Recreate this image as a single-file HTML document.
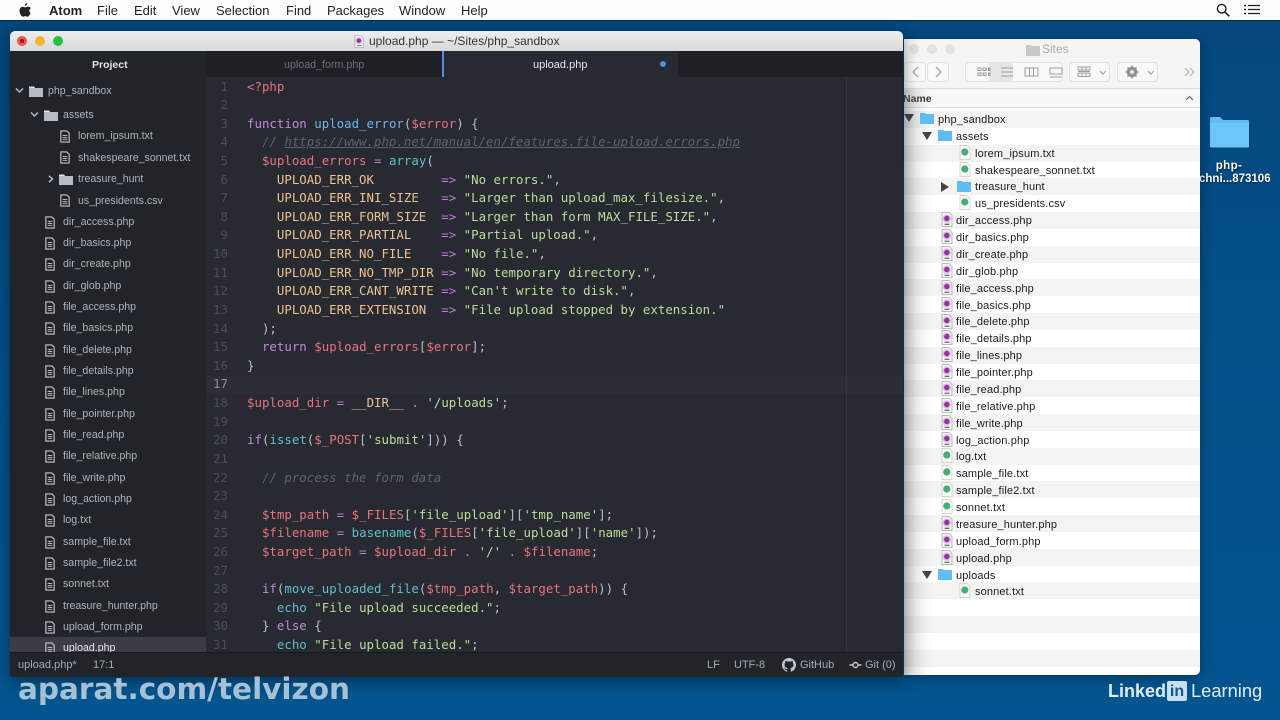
<!DOCTYPE html>
<html><head><meta charset="utf-8"><title>Atom</title>
<style>
*{box-sizing:border-box}
html,body{margin:0;padding:0;width:1280px;height:720px;overflow:hidden;background:#04528c;font-family:"Liberation Sans",sans-serif}
body{filter:blur(.3px)}
.a{position:absolute}
#bg{left:0;top:0;width:1280px;height:720px;background:linear-gradient(180deg,#04477c 0%,#044f88 40%,#03558f 100%)}
#menu{left:0;top:0;width:1280px;background:#fdfdfd;border-bottom:1px solid #0a2a4a;height:21px;font-size:13px;color:#222}
#menu span{position:absolute;top:2px;line-height:17px}
#atom{left:10px;top:31px;width:893px;height:646px;background:#212429;border-radius:5px 5px 4px 4px;overflow:hidden;box-shadow:0 4px 16px rgba(0,0,0,.45)}
#tb{left:0;top:0;width:893px;height:20px;background:linear-gradient(#eee,#d8d8d8);font-size:12px;color:#333;line-height:21px}
.dot{position:absolute;width:10px;height:10px;border-radius:50%;top:5px}
#tree .r,#fin .r{position:absolute;height:20px;line-height:20px;white-space:nowrap}
#tree .r{font-size:10.6px;color:#adb3be;transform:translateY(1px)}
#tree svg{margin-top:1px}
#editor{left:206px;top:77px;width:697px;height:575px;background:#272a30;overflow:hidden}
#code{position:absolute;left:0;top:0;width:697px;font:12.41px/18.62px "DejaVu Sans Mono","Liberation Mono",monospace;color:#b9bec8}
#code div{position:absolute;left:31px;height:18.62px;white-space:pre}
.ln{position:absolute;left:0;width:22px;text-align:right;color:#4a4e58;white-space:pre}
.k{color:#c586dd}.f{color:#6cb6f2}.v{color:#e8737e}.s{color:#bcdc9c}.c{color:#5c6370;font-style:italic}.u{text-decoration:underline}.o{color:#c678dd}.n{color:#ecc293}.m{color:#c678dd}.t{color:#5cc0cc}
#fin{left:904px;top:39px;width:296px;height:636px;background:#fff;border-radius:0 5px 5px 0;overflow:hidden;box-shadow:0 3px 12px rgba(0,0,0,.35)}
#fin .r{font-size:11px;color:#1c1c1c;letter-spacing:.14px;transform:translateY(1px)}
.st{position:absolute;left:0;width:296px;height:17px;background:#f3f3f1}
.btn{position:absolute;top:23px;height:20px;background:#f9f9f9;border:1px solid #e2e2e2;border-radius:4px}
.tri{position:absolute;width:0;height:0}
</style></head><body>
<svg width="0" height="0" style="position:absolute"><defs>
<symbol id="fi" viewBox="0 0 12 14"><path d="M1.500 1h6.500l2.500 2.500V13h-9z" fill="none" stroke="#c3c7cf" stroke-width="1.200"/><path d="M3.500 6h5M3.500 8h5M3.500 10h5" stroke="#c3c7cf" stroke-width="1"/></symbol>
<symbol id="fo" viewBox="0 0 14 12"><path d="M0 1.500h5l1 1.500h8v9H0z" fill="#b5bac4"/><path d="M0 1.500h5l1 1.500H0z" fill="#dde0e5"/></symbol>
<symbol id="bf" viewBox="0 0 14 12"><path d="M0 1h5l1 1h8v10H0z" fill="#5fbdf2"/></symbol>
<symbol id="gf" viewBox="0 0 12 15"><path d="M1 .5h7l3 3v11H1z" fill="#fbfbfb" stroke="#c9c9c9" stroke-width=".7"/><circle cx="5.800" cy="7" r="3.600" fill="#45ad76"/></symbol>
<symbol id="pf" viewBox="0 0 12 15"><path d="M1 .5h7l3 3v11H1z" fill="#f6f6f6" stroke="#a8a8a8" stroke-width=".8"/><circle cx="5.800" cy="6.500" r="4.300" fill="#d9c3e2"/><circle cx="5.800" cy="6.500" r="2.700" fill="#98309f"/><path d="M3.500 12.300h5" stroke="#777" stroke-width="1.300"/></symbol>
</defs></svg>
<div id="bg" class="a"></div>

<div id="menu" class="a">
<svg class="a" style="left:19px;top:3px" width="12" height="14" viewBox="0 0 12 14"><path d="M8.200 0c.1 1.300-1 2.700-2.500 2.800C5.500 1.500 6.800.2 8.200 0zM11.600 10c-.6 1.500-1.800 3.700-3.200 3.700-.9 0-1.300-.6-2.300-.6s-1.500.6-2.300.6C2.300 13.700.5 10.500.5 7.800c0-2.700 1.800-4.100 3.400-4.100 1 0 1.700.7 2.300.7s1.500-.8 2.700-.8c.6 0 2.100.2 3 1.600-2.300 1.400-1.900 4 -.3 4.800z" fill="#222"/></svg>
<span style="left:49px;font-weight:bold">Atom</span><span style="left:97px">File</span><span style="left:134px">Edit</span><span style="left:172px">View</span><span style="left:216px">Selection</span><span style="left:286px">Find</span><span style="left:327px">Packages</span><span style="left:399px">Window</span><span style="left:461px">Help</span>
<svg class="a" style="left:1216px;top:3px" width="14" height="14" viewBox="0 0 14 14"><circle cx="5.700" cy="5.700" r="4.300" fill="none" stroke="#222" stroke-width="1.400"/><path d="M9 9l4.300 4.300" stroke="#222" stroke-width="1.600"/></svg>
<svg class="a" style="left:1244px;top:4px" width="16" height="12" viewBox="0 0 16 12"><path d="M4 1.500h12M4 5.500h12M4 9.500h12" stroke="#222" stroke-width="1.300"/><path d="M0 1.500h2M0 5.500h2M0 9.500h2" stroke="#222" stroke-width="1.500"/></svg>
</div>

<!-- Desktop folder -->
<svg class="a" style="left:1209px;top:116px" width="41" height="32" viewBox="0 0 41 32"><path d="M1 2.500a1.500 1.500 0 011.500-1.500H11l3 3h24.500A1.500 1.500 0 0140 5.500V30a1.500 1.500 0 01-1.500 1.500h-36A1.500 1.500 0 011 30z" fill="#62bdf0"/><path d="M1 7h39v24H1z" fill="#6cc6f7"/></svg>
<div class="a" style="left:1170px;top:160px;width:118px;text-align:center;font-size:11.500px;letter-spacing:.4px;font-weight:bold;color:#fff;line-height:13.500px;text-shadow:0 1px 2px rgba(0,0,0,.6)">php-</div>
<div class="a" style="left:1199px;top:173px;white-space:nowrap;font-size:11.500px;font-weight:bold;color:#fff;line-height:13.500px;text-shadow:0 1px 2px rgba(0,0,0,.6)">chni...873106</div>

<!-- Finder -->
<div id="fin" class="a">
<div class="a" style="left:0;top:0;width:296px;height:51px;background:#f5f5f5"></div>
<div class="dot" style="left:5px;top:5px;background:#e2e2e2;width:10px;height:10px"></div>
<div class="dot" style="left:23px;top:5px;background:#e2e2e2"></div>
<div class="dot" style="left:41px;top:5px;background:#e2e2e2"></div>
<svg class="a" style="left:122px;top:5px" width="14" height="12" viewBox="0 0 14 12"><path d="M0 1h5l1 1h8v10H0z" fill="#c8c8c8"/></svg>
<div class="a" style="left:138px;top:3px;font-size:12px;line-height:15px;color:#a9a9a9">Sites</div>
<div class="btn" style="left:0;width:22px"></div><div class="btn" style="left:23px;width:22px"></div>
<svg class="a" style="left:0;top:23px" width="48" height="20" viewBox="0 0 48 20"><path d="M14 5l-5 5 5 5" fill="none" stroke="#a5a5a5" stroke-width="1.300"/><path d="M32 5l5 5-5 5" fill="none" stroke="#a5a5a5" stroke-width="1.300"/></svg>
<div class="btn" style="left:61px;width:98px"></div>
<div class="a" style="left:85px;top:23px;width:24px;height:20px;background:#e6e6e6"></div>
<svg class="a" style="left:61px;top:23px" width="98" height="20" viewBox="0 0 98 20" fill="none" stroke="#9a9a9a"><path d="M13 6h3v2.500h-3zM18 6h3v2.500h-3zM13 11h3v2.500h-3zM18 11h3v2.500h-3z"/><path d="M24 6h1.500v2.500H24zM24 11h1.500v2.500H24z" transform="translate(-.5 0)"/><path d="M36 6h12M36 10h12M36 14h12"/><path d="M60 6h13v8H60zM64.500 6v8M68.500 6v8"/><path d="M85 6h12v6H85zM85 15h12"/></svg>
<div class="btn" style="left:165px;width:41px"></div>
<svg class="a" style="left:165px;top:23px" width="41" height="20" viewBox="0 0 41 20" fill="none" stroke="#a0a0a0"><path d="M9 5h12v3H9zM9 9.500h12M9 11h12v3.500H9zM13 5v3M17 5v3M13 11v3.500M17 11v3.500"/><path d="M31 9l3 3 3-3" stroke-width="1.100"/></svg>
<div class="btn" style="left:213px;width:41px"></div>
<svg class="a" style="left:213px;top:23px" width="41" height="20" viewBox="0 0 41 20"><circle cx="15" cy="10" r="4" fill="none" stroke="#8f8f8f" stroke-width="2.500"/><path d="M15 3.500v13M8.500 10h13M10.500 5.500l9 9M19.500 5.500l-9 9" stroke="#8f8f8f" stroke-width="1.500"/><circle cx="15" cy="10" r="1.800" fill="#f2f2f2"/><path d="M31 9l3 3 3-3" fill="none" stroke="#a0a0a0" stroke-width="1.100"/></svg>
<svg class="a" style="left:280px;top:27px" width="12" height="12" viewBox="0 0 12 12" fill="none" stroke="#a5a5a5" stroke-width="1"><path d="M1 2l4 4-4 4M6 2l4 4-4 4"/></svg>
<div class="a" style="left:0;top:49px;width:296px;height:20px;background:#f8f8f8;border-top:1px solid #dcdcdc;border-bottom:1px solid #dcdcdc"></div>
<div class="a" style="left:-1px;top:51px;font-size:10.500px;font-weight:bold;line-height:18px;color:#333">Name</div>
<svg class="a" style="left:281px;top:56px" width="9" height="6" viewBox="0 0 9 6"><path d="M1 5l3.500-3.500L8 5" fill="none" stroke="#666" stroke-width="1.200"/></svg>
<div class="st" style="top:72px"></div><div class="st" style="top:105.500px"></div><div class="st" style="top:139px"></div><div class="st" style="top:173px"></div><div class="st" style="top:206.500px"></div><div class="st" style="top:240px"></div><div class="st" style="top:274px"></div><div class="st" style="top:307.500px"></div><div class="st" style="top:341px"></div><div class="st" style="top:375px"></div><div class="st" style="top:408.500px"></div><div class="st" style="top:442px"></div><div class="st" style="top:476px"></div><div class="st" style="top:509.500px"></div><div class="st" style="top:543px"></div><div class="st" style="top:577px"></div><div class="st" style="top:610.500px"></div>
<div class="a" style="left:0;top:50px;width:26px;height:586px;background:linear-gradient(90deg,rgba(120,120,120,.28),rgba(255,255,255,0))"></div>
<div class="tri" style="left:0;top:75px;border-left:5px solid transparent;border-right:5px solid transparent;border-top:8px solid #444"></div>
<svg class="a" style="left:16px;top:73px" width="14" height="12"><use href="#bf"/></svg><div class="r" style="left:34px;top:70px">php_sandbox</div>
<div class="tri" style="left:18px;top:92.500px;border-left:5px solid transparent;border-right:5px solid transparent;border-top:8px solid #444"></div>
<svg class="a" style="left:34px;top:90px" width="14" height="12"><use href="#bf"/></svg><div class="r" style="left:52px;top:87px">assets</div>
<svg class="a" style="left:55px;top:106px" width="12" height="15"><use href="#gf"/></svg><div class="r" style="left:71px;top:104px">lorem_ipsum.txt</div>
<svg class="a" style="left:55px;top:123px" width="12" height="15"><use href="#gf"/></svg><div class="r" style="left:71px;top:120.500px">shakespeare_sonnet.txt</div>
<div class="tri" style="left:37px;top:143px;border-top:5px solid transparent;border-bottom:5px solid transparent;border-left:8px solid #444"></div>
<svg class="a" style="left:53px;top:141px" width="14" height="12"><use href="#bf"/></svg><div class="r" style="left:71px;top:137px">treasure_hunt</div>
<svg class="a" style="left:55px;top:156px" width="12" height="15"><use href="#gf"/></svg><div class="r" style="left:71px;top:154px">us_presidents.csv</div>
<svg class="a" style="left:37px;top:173px" width="12" height="15"><use href="#pf"/></svg><div class="r" style="left:52px;top:171px">dir_access.php</div>
<svg class="a" style="left:37px;top:190px" width="12" height="15"><use href="#pf"/></svg><div class="r" style="left:52px;top:188px">dir_basics.php</div>
<svg class="a" style="left:37px;top:207px" width="12" height="15"><use href="#pf"/></svg><div class="r" style="left:52px;top:205px">dir_create.php</div>
<svg class="a" style="left:37px;top:224px" width="12" height="15"><use href="#pf"/></svg><div class="r" style="left:52px;top:222px">dir_glob.php</div>
<svg class="a" style="left:37px;top:241px" width="12" height="15"><use href="#pf"/></svg><div class="r" style="left:52px;top:238.500px">file_access.php</div>
<svg class="a" style="left:37px;top:258px" width="12" height="15"><use href="#pf"/></svg><div class="r" style="left:52px;top:255.500px">file_basics.php</div>
<svg class="a" style="left:37px;top:275px" width="12" height="15"><use href="#pf"/></svg><div class="r" style="left:52px;top:272px">file_delete.php</div>
<svg class="a" style="left:37px;top:291px" width="12" height="15"><use href="#pf"/></svg><div class="r" style="left:52px;top:289px">file_details.php</div>
<svg class="a" style="left:37px;top:308px" width="12" height="15"><use href="#pf"/></svg><div class="r" style="left:52px;top:306px">file_lines.php</div>
<svg class="a" style="left:37px;top:325px" width="12" height="15"><use href="#pf"/></svg><div class="r" style="left:52px;top:323px">file_pointer.php</div>
<svg class="a" style="left:37px;top:342px" width="12" height="15"><use href="#pf"/></svg><div class="r" style="left:52px;top:340px">file_read.php</div>
<svg class="a" style="left:37px;top:359px" width="12" height="15"><use href="#pf"/></svg><div class="r" style="left:52px;top:357px">file_relative.php</div>
<svg class="a" style="left:37px;top:376px" width="12" height="15"><use href="#pf"/></svg><div class="r" style="left:52px;top:373.500px">file_write.php</div>
<svg class="a" style="left:37px;top:393px" width="12" height="15"><use href="#pf"/></svg><div class="r" style="left:52px;top:390.500px">log_action.php</div>
<svg class="a" style="left:37px;top:409px" width="12" height="15"><use href="#gf"/></svg><div class="r" style="left:52px;top:407px">log.txt</div>
<svg class="a" style="left:37px;top:426px" width="12" height="15"><use href="#gf"/></svg><div class="r" style="left:52px;top:424px">sample_file.txt</div>
<svg class="a" style="left:37px;top:443px" width="12" height="15"><use href="#gf"/></svg><div class="r" style="left:52px;top:441px">sample_file2.txt</div>
<svg class="a" style="left:37px;top:460px" width="12" height="15"><use href="#gf"/></svg><div class="r" style="left:52px;top:458px">sonnet.txt</div>
<svg class="a" style="left:37px;top:477px" width="12" height="15"><use href="#pf"/></svg><div class="r" style="left:52px;top:475px">treasure_hunter.php</div>
<svg class="a" style="left:37px;top:494px" width="12" height="15"><use href="#pf"/></svg><div class="r" style="left:52px;top:492px">upload_form.php</div>
<svg class="a" style="left:37px;top:511px" width="12" height="15"><use href="#pf"/></svg><div class="r" style="left:52px;top:508.500px">upload.php</div>
<div class="tri" style="left:18px;top:531.500px;border-left:5px solid transparent;border-right:5px solid transparent;border-top:8px solid #444"></div>
<svg class="a" style="left:34px;top:529px" width="14" height="12"><use href="#bf"/></svg><div class="r" style="left:52px;top:525.500px">uploads</div>
<svg class="a" style="left:55px;top:544px" width="12" height="15"><use href="#gf"/></svg><div class="r" style="left:71px;top:542px">sonnet.txt</div>
</div>

<!-- Atom -->
<div id="atom" class="a">
<div id="tb" class="a">
<div class="dot" style="left:7px;background:#f4524a"></div><div class="a" style="left:10px;top:8px;width:4px;height:4px;border-radius:50%;background:#8c1a14"></div><div class="dot" style="left:25px;background:#f5b52f"></div><div class="dot" style="left:43px;background:#27c23c"></div>
<svg class="a" style="left:344px;top:4px" width="10" height="13" viewBox="0 0 12 15"><use href="#pf"/></svg>
<span class="a" style="left:359px;top:0;white-space:nowrap;font-size:12px">upload.php — ~/Sites/php_sandbox</span>
</div>
<div class="a" style="left:196px;top:20px;width:697px;height:26px;background:#1e2025"></div>
<div class="a" style="left:82px;top:27px;font-size:10.500px;font-weight:bold;line-height:14px;color:#e2e4e8">Project</div>
<div class="a" style="left:274px;top:27px;font-size:10.700px;line-height:14px;color:#6b717d">upload_form.php</div>
<div class="a" style="left:432px;top:20px;width:236px;height:26px;background:#272a30"></div>
<div class="a" style="left:432px;top:20px;width:2px;height:26px;background:#5789e6"></div>
<div class="a" style="left:523px;top:27px;font-size:11px;line-height:14px;color:#e4e6ea">upload.php</div>
<div class="a" style="left:650px;top:29.500px;width:6px;height:6px;border-radius:50%;background:#578af2"></div>
</div>

<div id="tree" class="a" style="left:0;top:0;width:206px;height:652px;overflow:hidden">
<div class="a" style="left:10px;top:637px;width:196px;height:15px;background:#3a3d47;margin-top:0"></div>
<svg class="a" style="left:15px;top:86px" width="9" height="7" viewBox="0 0 9 7"><path d="M1 1.500l3.500 3.500L8 1.500" fill="none" stroke="#b5bac4" stroke-width="1.500"/></svg>
<svg class="a" style="left:29px;top:84px" width="14" height="12"><use href="#fo"/></svg><div class="r" style="left:48px;top:80px">php_sandbox</div>
<svg class="a" style="left:30px;top:110px" width="9" height="7" viewBox="0 0 9 7"><path d="M1 1.500l3.500 3.500L8 1.500" fill="none" stroke="#b5bac4" stroke-width="1.500"/></svg>
<svg class="a" style="left:44px;top:108px" width="14" height="12"><use href="#fo"/></svg><div class="r" style="left:63px;top:104px">assets</div>
<svg class="a" style="left:59px;top:129px" width="12" height="13"><use href="#fi"/></svg><div class="r" style="left:78px;top:125px">lorem_ipsum.txt</div>
<svg class="a" style="left:59px;top:150px" width="12" height="13"><use href="#fi"/></svg><div class="r" style="left:78px;top:146.500px">shakespeare_sonnet.txt</div>
<svg class="a" style="left:48px;top:174px" width="6" height="8" viewBox="0 0 6 8"><path d="M1 .8l3.500 3.200L1 7.200" fill="none" stroke="#b5bac4" stroke-width="1.500"/></svg>
<svg class="a" style="left:59px;top:172px" width="14" height="12"><use href="#fo"/></svg><div class="r" style="left:78px;top:168px">treasure_hunt</div>
<svg class="a" style="left:59px;top:193px" width="12" height="13"><use href="#fi"/></svg><div class="r" style="left:78px;top:189.500px">us_presidents.csv</div>
<svg class="a" style="left:44px;top:215px" width="12" height="13"><use href="#fi"/></svg><div class="r" style="left:63px;top:210.500px">dir_access.php</div>
<svg class="a" style="left:44px;top:236px" width="12" height="13"><use href="#fi"/></svg><div class="r" style="left:63px;top:232px">dir_basics.php</div>
<svg class="a" style="left:44px;top:257px" width="12" height="13"><use href="#fi"/></svg><div class="r" style="left:63px;top:253px">dir_create.php</div>
<svg class="a" style="left:44px;top:279px" width="12" height="13"><use href="#fi"/></svg><div class="r" style="left:63px;top:274.500px">dir_glob.php</div>
<svg class="a" style="left:44px;top:300px" width="12" height="13"><use href="#fi"/></svg><div class="r" style="left:63px;top:296px">file_access.php</div>
<svg class="a" style="left:44px;top:321px" width="12" height="13"><use href="#fi"/></svg><div class="r" style="left:63px;top:317px">file_basics.php</div>
<svg class="a" style="left:44px;top:343px" width="12" height="13"><use href="#fi"/></svg><div class="r" style="left:63px;top:338.500px">file_delete.php</div>
<svg class="a" style="left:44px;top:364px" width="12" height="13"><use href="#fi"/></svg><div class="r" style="left:63px;top:360px">file_details.php</div>
<svg class="a" style="left:44px;top:385px" width="12" height="13"><use href="#fi"/></svg><div class="r" style="left:63px;top:381px">file_lines.php</div>
<svg class="a" style="left:44px;top:407px" width="12" height="13"><use href="#fi"/></svg><div class="r" style="left:63px;top:402.500px">file_pointer.php</div>
<svg class="a" style="left:44px;top:428px" width="12" height="13"><use href="#fi"/></svg><div class="r" style="left:63px;top:424px">file_read.php</div>
<svg class="a" style="left:44px;top:449px" width="12" height="13"><use href="#fi"/></svg><div class="r" style="left:63px;top:445px">file_relative.php</div>
<svg class="a" style="left:44px;top:471px" width="12" height="13"><use href="#fi"/></svg><div class="r" style="left:63px;top:466.500px">file_write.php</div>
<svg class="a" style="left:44px;top:492px" width="12" height="13"><use href="#fi"/></svg><div class="r" style="left:63px;top:488px">log_action.php</div>
<svg class="a" style="left:44px;top:513px" width="12" height="13"><use href="#fi"/></svg><div class="r" style="left:63px;top:509px">log.txt</div>
<svg class="a" style="left:44px;top:535px" width="12" height="13"><use href="#fi"/></svg><div class="r" style="left:63px;top:530.500px">sample_file.txt</div>
<svg class="a" style="left:44px;top:556px" width="12" height="13"><use href="#fi"/></svg><div class="r" style="left:63px;top:552px">sample_file2.txt</div>
<svg class="a" style="left:44px;top:577px" width="12" height="13"><use href="#fi"/></svg><div class="r" style="left:63px;top:573px">sonnet.txt</div>
<svg class="a" style="left:44px;top:599px" width="12" height="13"><use href="#fi"/></svg><div class="r" style="left:63px;top:594.500px">treasure_hunter.php</div>
<svg class="a" style="left:44px;top:620px" width="12" height="13"><use href="#fi"/></svg><div class="r" style="left:63px;top:616px">upload_form.php</div>
<svg class="a" style="left:44px;top:641px" width="12" height="13"><use href="#fi"/></svg><div class="r" style="left:63px;top:637px;color:#e8eaee">upload.php</div>
</div>

<div id="editor" class="a">
<div class="a" style="left:0;top:298.500px;width:697px;height:18.620px;background:#2b2e35"></div>
<div class="a" style="left:640px;top:0;width:1px;height:575px;background:#34373d"></div>
<div id="code">
<span class="ln" style="top:.5px">1</span><span class="ln" style="top:19.120px">2</span><span class="ln" style="top:37.740px">3</span><span class="ln" style="top:56.360px">4</span><span class="ln" style="top:74.980px">5</span><span class="ln" style="top:93.600px">6</span><span class="ln" style="top:112.220px">7</span><span class="ln" style="top:130.840px">8</span><span class="ln" style="top:149.460px">9</span><span class="ln" style="top:168.080px">10</span><span class="ln" style="top:186.700px">11</span><span class="ln" style="top:205.320px">12</span><span class="ln" style="top:223.940px">13</span><span class="ln" style="top:242.560px">14</span><span class="ln" style="top:261.180px">15</span><span class="ln" style="top:279.800px">16</span><span class="ln" style="top:298.420px;color:#8b909b">17</span><span class="ln" style="top:317.040px">18</span><span class="ln" style="top:335.660px">19</span><span class="ln" style="top:354.280px">20</span><span class="ln" style="top:372.900px">21</span><span class="ln" style="top:391.520px">22</span><span class="ln" style="top:410.140px">23</span><span class="ln" style="top:428.760px">24</span><span class="ln" style="top:447.380px">25</span><span class="ln" style="top:466px">26</span><span class="ln" style="top:484.620px">27</span><span class="ln" style="top:503.240px">28</span><span class="ln" style="top:521.860px">29</span><span class="ln" style="top:540.480px">30</span><span class="ln" style="top:559.100px">31</span>
<div style="left:41px;top:.5px"><span class="v">&lt;?php</span></div>
<div style="left:41px;top:37.740px"><span class="k">function</span> <span class="f">upload_error</span>(<span class="v">$error</span>) {</div>
<div style="left:41px;top:56.360px"><span class="c">  // <span class="u">https://www.php.net/manual/en/features.file-upload.errors.php</span></span></div>
<div style="left:41px;top:74.980px">  <span class="v">$upload_errors</span> <span class="o">=</span> <span class="t">array</span>(</div>
<div style="left:41px;top:93.600px">    <span class="n">UPLOAD_ERR_OK</span>         <span class="m">=&gt;</span> <span class="s">"No errors."</span>,</div>
<div style="left:41px;top:112.220px">    <span class="n">UPLOAD_ERR_INI_SIZE</span>   <span class="m">=&gt;</span> <span class="s">"Larger than upload_max_filesize."</span>,</div>
<div style="left:41px;top:130.840px">    <span class="n">UPLOAD_ERR_FORM_SIZE</span>  <span class="m">=&gt;</span> <span class="s">"Larger than form MAX_FILE_SIZE."</span>,</div>
<div style="left:41px;top:149.460px">    <span class="n">UPLOAD_ERR_PARTIAL</span>    <span class="m">=&gt;</span> <span class="s">"Partial upload."</span>,</div>
<div style="left:41px;top:168.080px">    <span class="n">UPLOAD_ERR_NO_FILE</span>    <span class="m">=&gt;</span> <span class="s">"No file."</span>,</div>
<div style="left:41px;top:186.700px">    <span class="n">UPLOAD_ERR_NO_TMP_DIR</span> <span class="m">=&gt;</span> <span class="s">"No temporary directory."</span>,</div>
<div style="left:41px;top:205.320px">    <span class="n">UPLOAD_ERR_CANT_WRITE</span> <span class="m">=&gt;</span> <span class="s">"Can't write to disk."</span>,</div>
<div style="left:41px;top:223.940px">    <span class="n">UPLOAD_ERR_EXTENSION</span>  <span class="m">=&gt;</span> <span class="s">"File upload stopped by extension."</span></div>
<div style="left:41px;top:242.560px">  );</div>
<div style="left:41px;top:261.180px">  <span class="k">return</span> <span class="v">$upload_errors</span>[<span class="v">$error</span>];</div>
<div style="left:41px;top:279.800px">}</div>
<div style="left:41px;top:317.040px"><span class="v">$upload_dir</span> <span class="o">=</span> <span class="n">__DIR__</span> <span class="o">.</span> <span class="s">'/uploads'</span>;</div>
<div style="left:41px;top:354.280px"><span class="k">if</span>(<span class="t">isset</span>(<span class="v">$_POST</span>[<span class="s">'submit'</span>])) {</div>
<div style="left:41px;top:391.520px"><span class="c">  // process the form data</span></div>
<div style="left:41px;top:428.760px">  <span class="v">$tmp_path</span> <span class="o">=</span> <span class="v">$_FILES</span>[<span class="s">'file_upload'</span>][<span class="s">'tmp_name'</span>];</div>
<div style="left:41px;top:447.380px">  <span class="v">$filename</span> <span class="o">=</span> <span class="t">basename</span>(<span class="v">$_FILES</span>[<span class="s">'file_upload'</span>][<span class="s">'name'</span>]);</div>
<div style="left:41px;top:466px">  <span class="v">$target_path</span> <span class="o">=</span> <span class="v">$upload_dir</span> <span class="o">.</span> <span class="s">'/'</span> <span class="o">.</span> <span class="v">$filename</span>;</div>
<div style="left:41px;top:503.240px">  <span class="k">if</span>(<span class="t">move_uploaded_file</span>(<span class="v">$tmp_path</span>, <span class="v">$target_path</span>)) {</div>
<div style="left:41px;top:521.860px">    <span class="t">echo</span> <span class="s">"File upload succeeded."</span>;</div>
<div style="left:41px;top:540.480px">  } <span class="k">else</span> {</div>
<div style="left:41px;top:559.100px">    <span class="t">echo</span> <span class="s">"File upload failed."</span>;</div>
</div>
</div>

<div class="a" style="left:10px;top:652px;width:893px;height:25px;background:#212429;border-top:1px solid #181a1f;border-radius:0 0 4px 4px;font-size:11px;color:#a3aab6;line-height:25px">
<span class="a" style="left:8px;top:0">upload.php*</span><span class="a" style="left:83px;top:0">17:1</span>
<span class="a" style="left:697px;top:0">LF</span><span class="a" style="left:724px;top:0">UTF-8</span>
<svg class="a" style="left:772px;top:5px" width="14" height="14" viewBox="0 0 16 16"><path fill="#c3c8d0" d="M8 0C3.580 0 0 3.580 0 8c0 3.540 2.290 6.530 5.470 7.590.4.070.55-.17.55-.38v-1.340c-2.230.48-2.700-1.070-2.700-1.070-.36-.92-.89-1.170-.89-1.170-.73-.5.050-.49.050-.49.8.060 1.220.82 1.220.82.710 1.220 1.870.87 2.330.66.070-.52.28-.87.51-1.070-1.780-.2-3.640-.89-3.640-3.950 0-.87.31-1.590.82-2.150-.08-.2-.36-1.020.08-2.120 0 0 .67-.21 2.200.82a7.600 7.600 0 014 0c1.530-1.040 2.200-.82 2.200-.82.440 1.100.16 1.920.08 2.120.51.560.82 1.270.82 2.150 0 3.070-1.870 3.750-3.650 3.950.29.250.54.730.54 1.480v2.200c0 .21.150.46.550.38A8 8 0 0016 8c0-4.420-3.580-8-8-8z"/></svg>
<span class="a" style="left:790px;top:0">GitHub</span>
<svg class="a" style="left:839px;top:7px" width="13" height="10" viewBox="0 0 12 10"><circle cx="6" cy="5" r="2.500" fill="none" stroke="#c2c7d0" stroke-width="1.400"/><path d="M0 5h3.500M8.500 5H12" stroke="#c2c7d0" stroke-width="1.400"/></svg>
<span class="a" style="left:855px;top:0;white-space:nowrap">Git (0)</span>
</div>

<div class="a" style="left:18px;top:671px;font:bold 29.500px/36px 'DejaVu Sans',sans-serif;color:#a6c0d6;white-space:nowrap">aparat.com/telvizon</div>
<div class="a" style="left:1108px;top:680px;font:bold 18px/22px 'Liberation Sans',sans-serif;color:#e0ecf6;white-space:nowrap">Linked</div>
<div class="a" style="left:1167px;top:681px;width:20px;height:20px;background:#c9dff0;border-radius:2px"></div>
<div class="a" style="left:1167px;top:681px;width:20px;height:20px;font:bold 16px/22px 'Liberation Sans',sans-serif;color:#0a5a96;text-align:center">in</div>
<div class="a" style="left:1191px;top:680px;font:18.300px/22px 'Liberation Sans',sans-serif;color:#e0ecf6;white-space:nowrap">Learning</div>
</body></html>
